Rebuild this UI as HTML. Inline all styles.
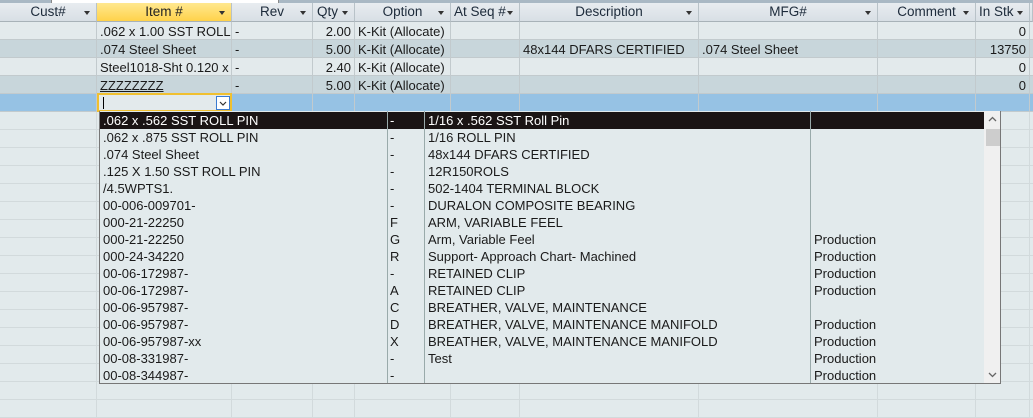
<html><head><style>
body{margin:0;width:1033px;height:416px;overflow:hidden;background:#e2eaec;font-family:"Liberation Sans",Arial,sans-serif;font-size:12.5px;color:#1a1a1a;position:relative}
.a{position:absolute;white-space:nowrap;overflow:hidden;box-sizing:border-box}
.h{top:3px;height:19px;background:linear-gradient(#e8ecf0,#d8dfe5);border-right:1px solid #b8c2c8;border-bottom:1px solid #a8b2b8;text-align:center;line-height:18px;color:#1c2a3a;font-size:13.5px}
.h:after{content:"";position:absolute;right:6px;top:8px;border:3.5px solid transparent;border-top:4px solid #333}
.c{height:18px;line-height:19px;border-right:1px solid #c2cacd;border-bottom:1px solid #c2cacd;padding:0 3px;font-size:13px}
.r{text-align:right}
.dd{left:99px;top:111px;width:902px;height:273px;background:#e2eaec;border:1px solid #777;border-top:none}
.dr{position:absolute;left:0;width:884px;height:17px;line-height:18px;font-size:13px}
.dr span{position:absolute;top:0}
</style></head><body>
<div class="a" style="left:0;top:0;width:1033px;height:3px;background:#a9b8c4"></div>
<div class="a" style="left:51px;top:0;width:228px;height:5px;background:#fff;border:1px solid #888;border-top:none"></div>
<div class="a h" style="left:0;width:97px">Cust#</div>
<div class="a h" style="left:97px;width:135px;background:linear-gradient(#ffe890,#ffd24a);color:#222">Item #</div>
<div class="a h" style="left:232px;width:81px">Rev</div>
<div class="a h" style="left:313px;width:42px;text-align:left;padding-left:4px">Qty</div>
<div class="a h" style="left:355px;width:96px">Option</div>
<div class="a h" style="left:451px;width:69px;text-align:left;padding-left:3px">At Seq #</div>
<div class="a h" style="left:520px;width:179px">Description</div>
<div class="a h" style="left:699px;width:179px">MFG#</div>
<div class="a h" style="left:878px;width:98px">Comment</div>
<div class="a h" style="left:976px;width:54px;text-align:left;padding-left:3px">In Stk</div>
<div class="a h" style="left:1030px;width:3px"></div>

<div id="rows"></div>
<script>
var cols=[[0,97],[97,135],[232,81],[313,42],[355,96],[451,69],[520,179],[699,179],[878,98],[976,54],[1030,10]];
var data=[
["",".062 x 1.00 SST ROLL PIN","-","2.00","K-Kit (Allocate)","","","","","0",""],
["",".074 Steel Sheet","-","5.00","K-Kit (Allocate)","","48x144 DFARS CERTIFIED",".074 Steel Sheet","","13750","0"],
["","Steel1018-Sht 0.120 x","-","2.40","K-Kit (Allocate)","","","","","0",""],
["","<u>ZZZZZZZZ</u>","-","5.00","K-Kit (Allocate)","","","","","0",""],
["","","","","","","","","","",""]];
var h="";
for(var i=0;i<data.length;i++){var y=22+i*18;var bg=i==4?"#96c2e4":(i%2?"#c8d6db":"#e3eaec");
for(var j=0;j<cols.length;j++){var r=(j==3||j==9)?" r":"";h+='<div class="a c'+r+'" style="left:'+cols[j][0]+'px;top:'+y+'px;width:'+cols[j][1]+'px;background:'+bg+'">'+data[i][j]+'</div>';}}
for(var i=0;i<17;i++){var y=112+i*18;for(var j=0;j<cols.length;j++){h+='<div class="a c" style="left:'+cols[j][0]+'px;top:'+y+'px;width:'+cols[j][1]+'px;border-color:#d2dadc"></div>';}}
document.getElementById("rows").innerHTML=h;
</script>
<div class="a" style="left:97px;top:93px;width:135px;height:19px;border:2px solid #f0c030;background:#e3eaec"><div class="a" style="left:4px;top:2px;width:1px;height:12px;background:#000"></div><div class="a" style="left:117px;top:1px;width:14px;height:14px;border:1px solid #3a7ad0;background:#fff"><svg width="12" height="12" style="position:absolute;left:0;top:0"><path d="M3 5 L6 8 L9 5" stroke="#333" stroke-width="1.2" fill="none"/></svg></div></div>

<div class="a dd">
<div id="dl"></div>
<div class="a" style="left:287px;top:0;width:1px;height:273px;background:#9aa"></div>
<div class="a" style="left:324px;top:0;width:1px;height:273px;background:#9aa"></div>
<div class="a" style="left:710px;top:0;width:1px;height:273px;background:#9aa"></div>
<div class="a" style="left:884px;top:0;width:17px;height:273px;background:#f0f0f0"><div class="a" style="left:2px;top:18px;width:14px;height:17px;background:#cdcdcd"></div><svg width="17" height="273" style="position:absolute;left:0;top:0"><path d="M5 10 L8.5 6.5 L12 10" stroke="#666" stroke-width="1.3" fill="none"/><path d="M5 262 L8.5 265.5 L12 262" stroke="#666" stroke-width="1.3" fill="none"/></svg></div>
</div>
<script>
var d=[[".062 x .562 SST ROLL PIN","-","1/16 x .562 SST Roll Pin",""],[".062 x .875 SST ROLL PIN","-","1/16 ROLL PIN",""],[".074 Steel Sheet","-","48x144 DFARS CERTIFIED",""],[".125 X 1.50 SST ROLL PIN","-","12R150ROLS",""],["/4.5WPTS1.","-","502-1404 TERMINAL BLOCK",""],["00-006-009701-","-","DURALON COMPOSITE BEARING",""],["000-21-22250","F","ARM, VARIABLE FEEL",""],["000-21-22250","G","Arm, Variable Feel","Production"],["000-24-34220","R","Support- Approach Chart- Machined","Production"],["00-06-172987-","-","RETAINED CLIP","Production"],["00-06-172987-","A","RETAINED CLIP","Production"],["00-06-957987-","C","BREATHER, VALVE, MAINTENANCE",""],["00-06-957987-","D","BREATHER, VALVE, MAINTENANCE MANIFOLD","Production"],["00-06-957987-xx","X","BREATHER, VALVE, MAINTENANCE MANIFOLD","Production"],["00-08-331987-","-","Test","Production"],["00-08-344987-","-","","Production"]];
var s="";for(var i=0;i<d.length;i++){var st=i==0?"background:#1a1414;color:#fff;":"";s+='<div class="dr" style="top:'+(1+i*17)+'px;'+st+'"><span style="left:3px">'+d[i][0]+'</span><span style="left:290px">'+d[i][1]+'</span><span style="left:328px">'+d[i][2]+'</span><span style="left:714px">'+d[i][3]+'</span></div>';}
document.getElementById("dl").innerHTML=s;
</script>
</body></html>
